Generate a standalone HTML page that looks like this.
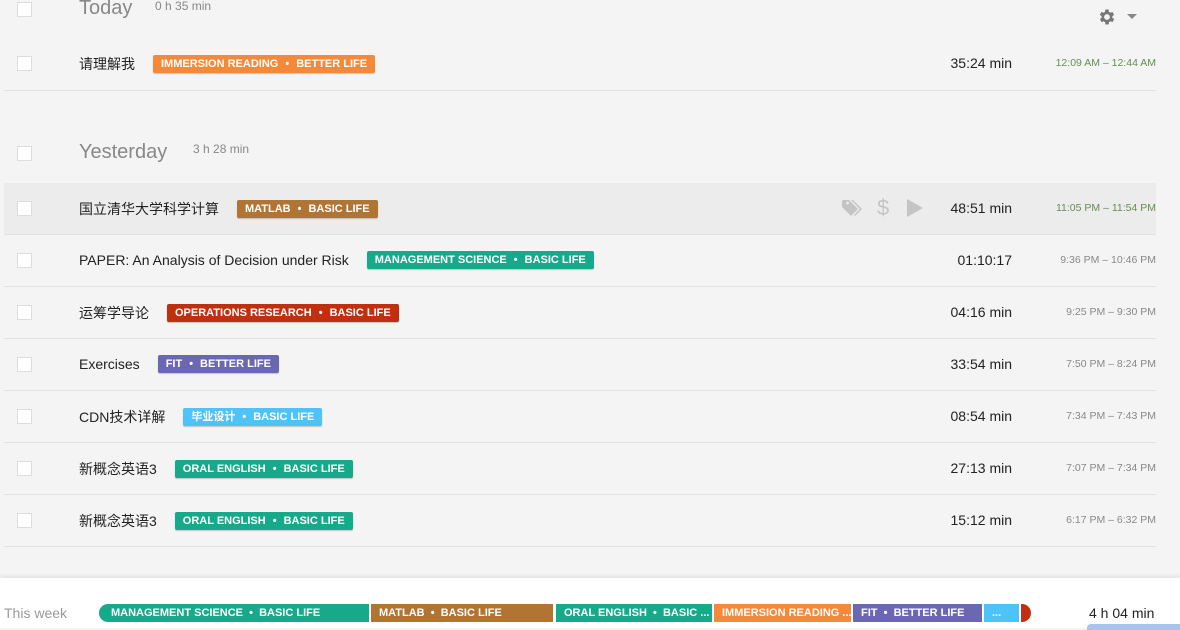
<!DOCTYPE html>
<html><head><meta charset="utf-8"><style>
*{margin:0;padding:0;box-sizing:border-box}
body{width:1180px;height:628px;overflow:hidden;background:#f4f4f4;font-family:"Liberation Sans","Noto Sans CJK SC",sans-serif;position:relative}
.cb{position:absolute;left:17px;width:15px;height:15px;background:#fff;border:1px solid #ddd}
.hd{position:absolute;left:79px;font-size:20px;color:#888}
.hs{position:absolute;font-size:12px;color:#888}
.row{position:absolute;left:4px;width:1152px;height:52px;border-bottom:1px solid #e2e2e2}
.row .cb{left:13px;top:18px}
.t{position:absolute;left:75px;top:16px;font-size:14px;color:#222;white-space:nowrap}
.tag{display:inline-block;margin-left:18px;vertical-align:2px;height:18px;line-height:18px;padding:0 8px;font-size:11px;font-weight:bold;color:#fff;border-radius:2px;box-shadow:0 1px 1px rgba(0,0,0,.2)}
.tag i{font-style:normal;margin:0 7px}
.d{position:absolute;right:144px;top:17px;font-size:14px;color:#222}
.r{position:absolute;right:0;top:19px;font-size:10.5px;color:#888}
.o{background:#f5893a}.b{background:#b07433}.g{background:#16a98a}.rd{background:#c0300f}.p{background:#6b67b0}.lb{background:#4dc3f7}
.foot{position:absolute;left:0;top:578px;width:1180px;height:50px;background:#fff;box-shadow:0 -2px 4px rgba(0,0,0,.08)}
.seg{position:absolute;top:26px;height:18px;line-height:18px;color:#fff;font-size:11px;font-weight:bold;padding-left:8px;white-space:nowrap;overflow:hidden}
</style></head><body>
<div class="cb" style="top:2px"></div>
<div class="hd" style="top:-3px">Today</div>
<div class="hs" style="left:155px;top:-1px">0 h 35 min</div>
<svg style="position:absolute;left:1097px;top:7px" width="20" height="20" viewBox="0 0 24 24"><path fill="#777" d="M19.4 13a7.5 7.5 0 0 0 0-2l2.1-1.6-2-3.5-2.5 1a7 7 0 0 0-1.7-1L15 3h-4l-.4 2.9a7 7 0 0 0-1.7 1l-2.5-1-2 3.5L6.6 11a7.5 7.5 0 0 0 0 2l-2.1 1.6 2 3.5 2.5-1a7 7 0 0 0 1.7 1L11 21h4l.4-2.9a7 7 0 0 0 1.7-1l2.5 1 2-3.5zM13 15.5a3.5 3.5 0 1 1 0-7 3.5 3.5 0 0 1 0 7z" transform="translate(-1 0)"/></svg>
<div style="position:absolute;left:1127px;top:14px;border-left:5px solid transparent;border-right:5px solid transparent;border-top:5px solid #888"></div>

<div class="row" style="top:38px;height:53px"><div class="cb"></div><div class="t">请理解我<span class="tag o">IMMERSION READING<i>•</i>BETTER LIFE</span></div><div class="d">35:24 min</div><div class="r" style="color:#6a8a5a">12:09 AM – 12:44 AM</div></div>

<div class="cb" style="top:146px"></div>
<div class="hd" style="top:141px">Yesterday</div>
<div class="hs" style="left:193px;top:142px">3 h 28 min</div>

<div class="row" style="top:183px;background:#ececec"><div class="cb"></div><div class="t">国立清华大学科学计算<span class="tag b">MATLAB<i>•</i>BASIC LIFE</span></div>
<svg style="position:absolute;left:838px;top:16px" width="20" height="18" viewBox="0 0 20 18"><path fill="#c4c4c4" d="M0 2v6l9 9 7-7-9-9H1zM4 4a1.5 1.5 0 1 1 0 .1z"/><path fill="#c4c4c4" d="M9 1h2l9 9-7 7-1-1 6-6z"/></svg>
<div style="position:absolute;left:873px;top:12px;font-size:22px;color:#c4c4c4">$</div>
<svg style="position:absolute;left:903px;top:16px" width="16" height="18"><path fill="#c4c4c4" d="M0 0L16 9 0 18z"/></svg>
<div class="d">48:51 min</div><div class="r" style="color:#6a8a5a">11:05 PM – 11:54 PM</div></div>
<div class="row" style="top:235px"><div class="cb"></div><div class="t">PAPER: An Analysis of Decision under Risk<span class="tag g">MANAGEMENT SCIENCE<i>•</i>BASIC LIFE</span></div><div class="d">01:10:17</div><div class="r">9:36 PM – 10:46 PM</div></div>
<div class="row" style="top:287px"><div class="cb"></div><div class="t">运筹学导论<span class="tag rd">OPERATIONS RESEARCH<i>•</i>BASIC LIFE</span></div><div class="d">04:16 min</div><div class="r">9:25 PM – 9:30 PM</div></div>
<div class="row" style="top:339px"><div class="cb"></div><div class="t">Exercises<span class="tag p">FIT<i>•</i>BETTER LIFE</span></div><div class="d">33:54 min</div><div class="r">7:50 PM – 8:24 PM</div></div>
<div class="row" style="top:391px"><div class="cb"></div><div class="t">CDN技术详解<span class="tag lb">毕业设计<i>•</i>BASIC LIFE</span></div><div class="d">08:54 min</div><div class="r">7:34 PM – 7:43 PM</div></div>
<div class="row" style="top:443px"><div class="cb"></div><div class="t">新概念英语3<span class="tag g">ORAL ENGLISH<i>•</i>BASIC LIFE</span></div><div class="d">27:13 min</div><div class="r">7:07 PM – 7:34 PM</div></div>
<div class="row" style="top:495px"><div class="cb"></div><div class="t">新概念英语3<span class="tag g">ORAL ENGLISH<i>•</i>BASIC LIFE</span></div><div class="d">15:12 min</div><div class="r">6:17 PM – 6:32 PM</div></div>

<div class="foot">
<div style="position:absolute;left:4px;top:27px;font-size:14px;color:#999">This week</div>
<div class="seg g" style="left:99px;width:270px;padding-left:12px;border-radius:9px 0 0 9px">MANAGEMENT SCIENCE&nbsp; •&nbsp; BASIC LIFE</div>
<div class="seg b" style="left:371px;width:182px">MATLAB&nbsp; •&nbsp; BASIC LIFE</div>
<div class="seg g" style="left:556px;width:156px">ORAL ENGLISH&nbsp; •&nbsp; BASIC ...</div>
<div class="seg o" style="left:714px;width:137px">IMMERSION READING ...</div>
<div class="seg p" style="left:853px;width:129px">FIT&nbsp; •&nbsp; BETTER LIFE</div>
<div class="seg lb" style="left:984px;width:35px">...</div>
<div class="seg rd" style="left:1021px;width:10px;padding:0;border-radius:0 9px 9px 0"></div>
<div style="position:absolute;left:1089px;top:27px;font-size:14px;color:#222">4 h 04 min</div>
<div style="position:absolute;left:1087px;top:46px;width:93px;height:6px;background:#a8c4ee;border-radius:4px 0 0 0"></div>
</div>
</body></html>
